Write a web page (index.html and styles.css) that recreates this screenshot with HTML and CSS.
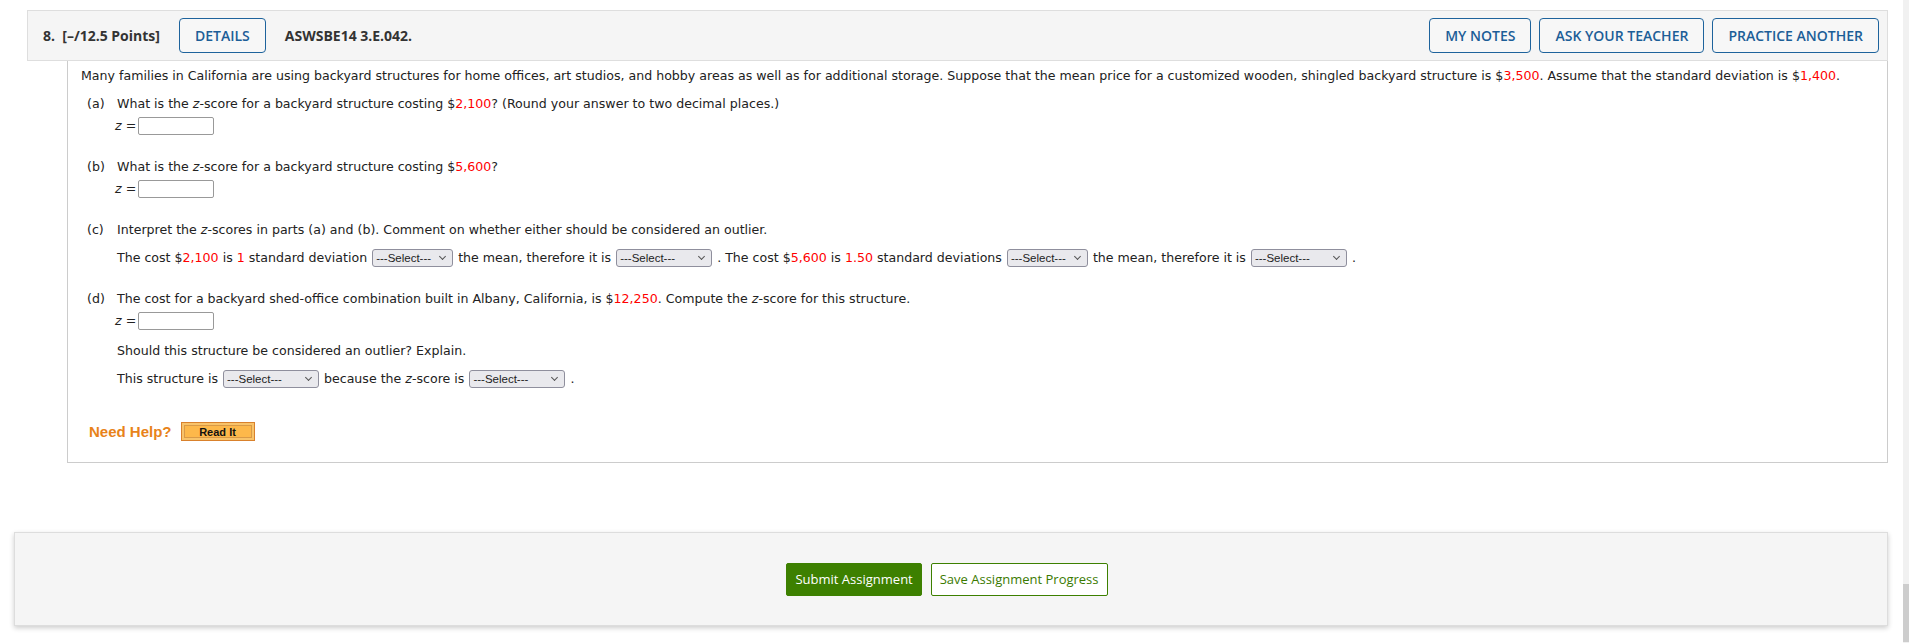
FILE: index.html
```html
<!DOCTYPE html>
<html>
<head>
    <meta charset="UTF-8">
    <title>Assignment - Question 8</title>
    <link rel="stylesheet" href="styles.css">
</head>
<body>

<div class="page">
    <div class="question">
        <!-- Question header bar -->
        <div class="q-header">
            <div class="q-title">8.&nbsp; [&ndash;/12.5 Points]</div>
            <button class="hdr-btn">DETAILS</button>
            <div class="q-code">ASWSBE14 3.E.042.</div>
            <div class="hdr-right">
                <button class="hdr-btn">MY NOTES</button>
                <button class="hdr-btn">ASK YOUR TEACHER</button>
                <button class="hdr-btn">PRACTICE ANOTHER</button>
            </div>
        </div>

        <!-- Question body -->
        <div class="q-body">
            <p class="intro">Many families in California are using backyard structures for home offices, art studios, and hobby areas as well as for additional storage. Suppose that the mean price for a customized wooden, shingled backyard structure is $<span class="red">3,500</span>. Assume that the standard deviation is $<span class="red">1,400</span>.</p>

            <div class="part part-first">
                <span class="part-label">(a)</span>
                <div class="part-content">
                    <p class="line">What is the <i>z</i>-score for a backyard structure costing $<span class="red">2,100</span>? (Round your answer to two decimal places.)</p>
                    <div class="answer-row"><i>z</i>&nbsp;=<input type="text" class="answer"></div>
                </div>
            </div>

            <div class="part">
                <span class="part-label">(b)</span>
                <div class="part-content">
                    <p class="line">What is the <i>z</i>-score for a backyard structure costing $<span class="red">5,600</span>?</p>
                    <div class="answer-row"><i>z</i>&nbsp;=<input type="text" class="answer"></div>
                </div>
            </div>

            <div class="part">
                <span class="part-label">(c)</span>
                <div class="part-content">
                    <p class="line">Interpret the <i>z</i>-scores in parts (a) and (b). Comment on whether either should be considered an outlier.</p>
                    <div class="select-row">The cost $<span class="red">2,100</span> is <span class="red">1</span> standard deviation <span class="sel-wrap"><select class="sel sel-short"><option>---Select---</option></select></span> the mean, therefore it is <span class="sel-wrap"><select class="sel sel-long"><option>---Select---</option></select></span> . The cost $<span class="red">5,600</span> is <span class="red">1.50</span> standard deviations <span class="sel-wrap"><select class="sel sel-short"><option>---Select---</option></select></span> the mean, therefore it is <span class="sel-wrap"><select class="sel sel-long"><option>---Select---</option></select></span> .</div>
                </div>
            </div>

            <div class="part">
                <span class="part-label">(d)</span>
                <div class="part-content">
                    <p class="line">The cost for a backyard shed-office combination built in Albany, California, is $<span class="red">12,250</span>. Compute the <i>z</i>-score for this structure.</p>
                    <div class="answer-row"><i>z</i>&nbsp;=<input type="text" class="answer"></div>
                    <p class="line line-gap">Should this structure be considered an outlier? Explain.</p>
                    <div class="select-row">This structure is <span class="sel-wrap"><select class="sel sel-long"><option>---Select---</option></select></span> because the <i>z</i>-score is <span class="sel-wrap"><select class="sel sel-long"><option>---Select---</option></select></span> .</div>
                </div>
            </div>

            <div class="help">
                <span class="help-text">Need Help?</span>
                <button class="read-it">Read It</button>
            </div>
        </div>
    </div>

    <!-- Submit bar -->
    <div class="footer">
        <button class="btn-submit">Submit Assignment</button>
        <button class="btn-save">Save Assignment Progress</button>
    </div>
</div>

<div class="scrollbar"><div class="scroll-thumb"></div></div>

</body>
</html>
```

FILE: styles.css
```css
body {
    margin: 0;
    padding: 0;
    background-color: #fff;
    font-family: "DejaVu Sans", Verdana, sans-serif;
    color: #222;
}

.page {
    padding: 10px 21px 17px 14px;
}

/* Question block */
.question {
    margin-left: 13px;
}

.q-header {
    display: flex;
    align-items: center;
    height: 49px;
    padding: 0 8px 0 15px;
    background-color: #f5f5f5;
    border: 1px solid #dedede;
    font-family: "Open Sans", sans-serif;
    font-size: 14px;
    font-weight: 700;
    color: #333;
}

.q-title {
    margin-right: 19px;
}

.q-code {
    margin-left: 19px;
}

.hdr-right {
    margin-left: auto;
    display: flex;
    gap: 8px;
}

.hdr-btn {
    height: 35px;
    padding: 0 15px;
    background-color: #f7f7f7;
    border: 1px solid #1e639c;
    border-radius: 4px;
    font-family: "Open Sans", sans-serif;
    font-size: 14px;
    font-weight: 600;
    color: #1c5e97;
    cursor: pointer;
}

.q-body {
    margin-left: 40px;
    padding: 7px 13px 21px 13px;
    border: 1px solid #cccccc;
    border-top: none;
    font-size: 12.6px;
    line-height: 16px;
}

.q-body p {
    margin: 0;
}

.red {
    color: #f00;
}

/* Parts (a) - (d) */
.part {
    display: flex;
    margin-top: 24px;
}

.part-first {
    margin-top: 12px;
}

.part-label {
    width: 30px;
    padding-left: 6px;
    flex-shrink: 0;
}

.part-content {
    flex: 1;
}

.answer-row {
    display: flex;
    align-items: center;
    height: 18px;
    margin-top: 5px;
    margin-left: -2px;
}

.answer {
    width: 76px;
    height: 18px;
    box-sizing: border-box;
    margin: 0 0 0 2px;
    border: 1px solid #999;
    border-radius: 2px;
}

.select-row {
    height: 18px;
    line-height: 18px;
    margin-top: 11px;
    white-space: nowrap;
}

.line-gap {
    margin-top: 13px !important;
}

/* Dropdowns */
.sel-wrap {
    position: relative;
    display: inline-block;
    height: 18px;
    margin: 0 1px;
    vertical-align: top;
}

.sel-wrap::after {
    content: "";
    position: absolute;
    right: 8px;
    top: 5px;
    width: 4px;
    height: 4px;
    border-right: 1px solid #555;
    border-bottom: 1px solid #555;
    transform: rotate(45deg);
    pointer-events: none;
}

.sel {
    -webkit-appearance: none;
    appearance: none;
    display: block;
    height: 18px;
    margin: 0;
    padding: 0 0 0 3px;
    background-color: #e9e9ed;
    border: 1px solid #8f8f9d;
    border-radius: 3px;
    font-family: "Liberation Sans", Arial, sans-serif;
    font-size: 11.5px;
    color: #222;
}

.sel-short {
    width: 81px;
}

.sel-long {
    width: 96px;
}

/* Need help */
.help {
    display: flex;
    align-items: center;
    margin-top: 34px;
    padding-left: 8px;
}

.help-text {
    font-family: "Liberation Sans", Arial, sans-serif;
    font-size: 15px;
    font-weight: 700;
    color: #e8831a;
    margin-right: 9px;
}

.read-it {
    width: 74px;
    height: 19px;
    padding: 0;
    background-color: #fdb84a;
    border: 1px solid #d9812c;
    box-shadow: inset 0 0 0 2px #f8c36a, inset 0 0 0 3px #d99a47;
    font-family: "Liberation Sans", Arial, sans-serif;
    font-size: 11px;
    font-weight: 700;
    color: #111;
    cursor: pointer;
}

/* Footer bar */
.footer {
    display: flex;
    justify-content: center;
    align-items: center;
    gap: 9px;
    height: 92px;
    margin-top: 69px;
    padding-right: 8px;
    background-color: #f5f5f5;
    border: 1px solid #dddddd;
    box-shadow: 0 2px 5px rgba(0, 0, 0, 0.2);
}

.btn-submit {
    height: 33px;
    padding: 0 8px;
    background-color: #3d8000;
    border: 1px solid #3d8000;
    border-radius: 2px;
    font-family: "Open Sans", sans-serif;
    font-size: 13px;
    color: #fff;
    cursor: pointer;
}

.btn-save {
    height: 33px;
    padding: 0 8px;
    background-color: #fff;
    border: 1px solid #3d8000;
    border-radius: 2px;
    font-family: "Open Sans", sans-serif;
    font-size: 13px;
    color: #3b7a00;
    cursor: pointer;
}

/* Page scrollbar */
.scrollbar {
    position: fixed;
    top: 0;
    right: 0;
    width: 6px;
    height: 100%;
    background-color: #f1f1f1;
}

.scroll-thumb {
    position: absolute;
    bottom: 1px;
    left: 0;
    width: 6px;
    height: 58px;
    background-color: #cdcdcd;
}
```
